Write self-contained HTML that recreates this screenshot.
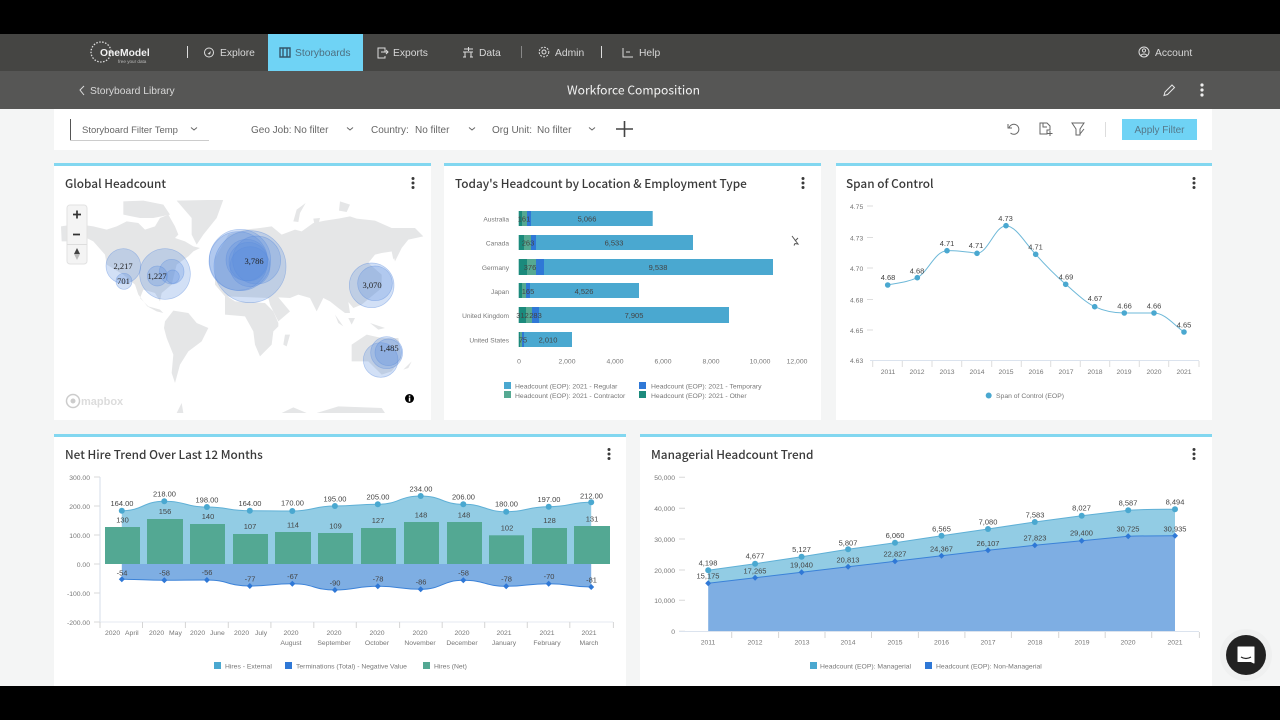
<!DOCTYPE html>
<html lang="en"><head><meta charset="utf-8"><title>Workforce Composition</title>
<style>
html,body{margin:0;padding:0;background:#000;width:1280px;height:720px;overflow:hidden}
svg{display:block;filter:blur(.35px)}
text{font-family:"Liberation Sans","Noto Sans CJK JP",sans-serif}
.n{font-size:10.3px;fill:#d8d8d8}
.t{font-family:"Noto Sans CJK JP","Liberation Sans",sans-serif;font-size:11.8px;fill:#3a3a3a;font-weight:500}
.f{font-size:10px;fill:#666}
.d{font-size:7.5px;fill:#444;text-anchor:middle}
.c{font-size:6.8px;fill:#777;text-anchor:middle}
.g{font-size:6.8px;fill:#777}
.ic{fill:none;stroke:#ddd;stroke-width:1}
.ig{fill:none;stroke:#666;stroke-width:1}
</style></head><body>
<svg width="1280" height="720" viewBox="0 0 1280 720" xmlns="http://www.w3.org/2000/svg">
<defs>
<path id="dm" d="M0-3 3 0 0 3-3 0Z" fill="#2f78d6"/>
<g id="keb" fill="#3a3a3a"><circle cx="0" cy="-4.5" r="1.5"/><circle cx="0" cy="0" r="1.5"/><circle cx="0" cy="4.5" r="1.5"/></g>
<clipPath id="mc"><rect x="54" y="200" width="377" height="213"/></clipPath>
</defs>
<rect width="1280" height="720" fill="#000"/>
<rect y="34" width="1280" height="652" fill="#f4f5f5"/>
<rect y="34" width="1280" height="37" fill="#454543"/>
<rect y="71" width="1280" height="38" fill="#565655"/>
<rect x="268" y="34" width="95" height="37" fill="#6fd3f5"/>

<!-- nav -->
<circle cx="101" cy="52" r="10" fill="none" stroke="#ddd" stroke-width="1.3" stroke-dasharray="1.5 1.5"/>
<text x="100" y="56" font-size="10.3" font-weight="bold" fill="#f0f0f0">OneModel</text>
<text x="118" y="63" font-size="4.6" fill="#bbb">free your data</text>
<rect x="187" y="46" width="1" height="12" fill="#ddd"/>
<circle cx="209" cy="52.5" r="4.5" class="ic"/><path d="M207.5 54 211 51 210 54.5Z" fill="#ddd"/>
<text x="220" y="56" class="n">Explore</text>
<path d="M280 48h10v9h-10zM283 48v9M287 48v9" fill="none" stroke="#34566a" stroke-width="1.4"/>
<text x="295" y="56" style="fill:#4d6f80;font-size:10.3px">Storyboards</text>
<path d="M385 52V48h-7v10h7v-2M381 52h7m-2-2 2 2-2 2" class="ic"/>
<text x="393" y="56" class="n">Exports</text>
<path d="M464 49h9M468.500 47v4M463 52h10M465 52v5M471 52v5M463 57h3M470 57h3" class="ic"/>
<text x="479" y="56" class="n">Data</text>
<rect x="521" y="46" width="1" height="12" fill="#888"/>
<circle cx="544" cy="52" r="2" class="ic"/><circle cx="544" cy="52" r="4.800" fill="none" stroke="#ddd" stroke-dasharray="2 1.200"/>
<text x="555" y="56" class="n">Admin</text>
<rect x="601" y="46" width="1" height="12" fill="#ddd"/>
<path d="M623 48v9h10M626 52h4" class="ic"/>
<text x="639" y="56" class="n">Help</text>
<circle cx="1144" cy="52" r="5" class="ic"/><circle cx="1144" cy="50.500" r="1.600" class="ic"/><path d="M1141 55.500c1-2 5-2 6 0" class="ic"/>
<text x="1155" y="56" class="n">Account</text>

<!-- subheader -->
<path d="M84 86 80 90 84 95" fill="none" stroke="#ddd"/>
<text x="90" y="94" class="n">Storyboard Library</text>
<text x="633.500" y="94.500" text-anchor="middle" font-size="12.100" fill="#f2f2f2" style="font-family:'Noto Sans CJK JP',sans-serif">Workforce Composition</text>
<path d="M1164 95.500l1-3.500 7-7 2.500 2.500-7 7z" fill="none" stroke="#e6e6e6"/>
<g transform="translate(1202 90)"><circle cy="-5" r="1.600" fill="#eee"/><circle r="1.600" fill="#eee"/><circle cy="5" r="1.600" fill="#eee"/></g>

<!-- filter bar -->
<rect x="54" y="109" width="1158" height="41" fill="#fff"/>
<rect x="70" y="119" width="1" height="21" fill="#555"/>
<rect x="70" y="140" width="139" height="1" fill="#ccc"/>
<text x="82" y="133" style="font-size:9.5px;fill:#666">Storyboard Filter Temp</text>
<path d="M191 127.500l3 2.500 3-2.500M347 127.500l3 2.500 3-2.500M469 127.500l3 2.500 3-2.500M589 127.500l3 2.500 3-2.500" class="ig"/>
<text x="251" y="133" class="f">Geo Job:</text><text x="294" y="133" class="f">No filter</text>
<text x="371" y="133" class="f">Country:</text><text x="415" y="133" class="f">No filter</text>
<text x="492" y="133" class="f">Org Unit:</text><text x="537" y="133" class="f">No filter</text>
<path d="M616 129h17M624.500 121v16" stroke="#444" stroke-width="1.600" fill="none"/>
<path d="M1009 128a5 5 0 1 1 1.500 5M1008 124v4h4" class="ig"/>
<path d="M1040 123h7l3 3v4h-3v4h-7zM1043 123v4h4M1050 131v5M1047.500 133.500h5" class="ig"/>
<path d="M1072 123h12l-4 6v6h-4v-6zM1080 134l4-5" class="ig"/>
<rect x="1105" y="122" width="1" height="15" fill="#ddd"/>
<rect x="1122" y="119" width="75" height="21" fill="#6fd3f5"/>
<text x="1159.500" y="133" text-anchor="middle" font-size="10" fill="#55788a">Apply Filter</text>

<!-- cards -->
<g fill="#fff">
<rect x="54" y="163" width="377" height="257"/><rect x="444" y="163" width="377" height="257"/><rect x="836" y="163" width="376" height="257"/>
<rect x="54" y="434" width="572" height="252"/><rect x="640" y="434" width="572" height="252"/>
</g>
<g fill="#82d7f0">
<rect x="54" y="163" width="377" height="3"/><rect x="444" y="163" width="377" height="3"/><rect x="836" y="163" width="376" height="3"/>
<rect x="54" y="434" width="572" height="3"/><rect x="640" y="434" width="572" height="3"/>
</g>
<text x="65" y="188" class="t">Global Headcount</text>
<text x="455" y="188" class="t">Today's Headcount by Location &amp; Employment Type</text>
<text x="846" y="188" class="t">Span of Control</text>
<text x="65" y="459" class="t">Net Hire Trend Over Last 12 Months</text>
<text x="651" y="459" class="t">Managerial Headcount Trend</text>
<use href="#keb" x="413" y="183"/><use href="#keb" x="803" y="183"/><use href="#keb" x="1194" y="183"/><use href="#keb" x="609" y="454"/><use href="#keb" x="1194" y="454"/>

<!-- map -->
<g clip-path="url(#mc)">
<g transform="translate(60 198) scale(.33333)" fill="#e5e6e7">
<path d="M3 85 50 78 100 85 140 95 170 85 200 70 235 75 255 95 285 85 300 60 325 50 345 85 355 110 345 120 375 130 400 145 420 150 400 160 385 175 350 200 335 260 305 285 300 310 285 285 250 275 240 300 265 325 300 335 310 345 290 340 262 325 235 290 225 260 190 230 140 200 135 170 100 130 60 110 20 130 5 130Z"/>
<path d="M190 10 250 8 310 20 330 50 280 60 240 60 190 50Z"/>
<path d="M350 8 490 5 470 60 430 110 410 140 395 110 395 60Z"/>
<path d="M315 370 340 338 385 345 410 375 445 390 425 430 385 460 360 500 345 555 335 525 340 470 320 420 312 390Z"/>
<path d="M350 645 365 615 370 645Z"/>
</g>
<g transform="translate(235 198) scale(.33333)" fill="#e5e6e7">
<path d="M-60 180-20 110 30 95 75 90 110 85 140 110 180 95 200 100 235 75 270 68 310 62 345 55 365 62 420 68 470 90 540 90 565 115 520 125 500 150 480 190 472 160 440 165 420 170 400 195 440 230 440 270 380 320 355 330 340 312 345 345 330 345 310 330 285 310 265 300 245 340 225 300 190 290 165 300 130 298 165 340 130 370 105 320 100 300-30 295-60 260Z"/>
<path d="M-30 290 0 310 90 315 115 340 130 375 130 385 115 400 110 440 75 475 60 440 55 400 30 355-30 350Z"/>
<path d="M150 410 165 410 155 445 145 440Z"/>
<path d="M350 440 395 410 440 420 490 420 500 480 470 520 440 530 400 490 350 490Z"/>
<path d="M300 350 325 385 310 375ZM340 360 360 360 350 380ZM405 375 450 390 430 395ZM505 515 530 490 520 510ZM470 160 495 140 475 185ZM175 70 185 35 212 15 195 45 190 72ZM235 62 255 60 250 80 238 78ZM315 10 345 20 335 42 312 38Z"/>
<path d="M140 645 175 628 215 645ZM245 645 310 625 440 630 450 645Z"/>
</g>
</g>
<g transform="translate(50 160) scale(.33333)">
<g fill="rgba(90,140,222,.27)" stroke="rgba(90,140,222,.45)" stroke-width="2">
<circle cx="220" cy="318" r="52"/><circle cx="222" cy="364" r="24"/><circle cx="345" cy="342" r="76"/><circle cx="365" cy="335" r="37"/><circle cx="322" cy="348" r="30"/><circle cx="368" cy="350" r="20"/>
<circle cx="565" cy="303" r="88"/><circle cx="600" cy="320" r="108"/><circle cx="570" cy="300" r="92"/><circle cx="590" cy="300" r="62"/><circle cx="595" cy="305" r="58"/><circle cx="600" cy="320" r="60"/><circle cx="620" cy="300" r="72"/>
<circle cx="965" cy="376" r="67"/><circle cx="975" cy="370" r="52"/>
<circle cx="992" cy="600" r="52"/><circle cx="1010" cy="578" r="48"/><circle cx="1015" cy="577" r="40"/>
</g>
</g>
<g>
<text x="123" y="269" text-anchor="middle" font-size="8.5" fill="#222" style="font-family:'Liberation Serif',serif">2,217</text><text x="123.500" y="284" text-anchor="middle" font-size="8.5" fill="#222" style="font-family:'Liberation Serif',serif">701</text><text x="157" y="279" text-anchor="middle" font-size="8.5" fill="#222" style="font-family:'Liberation Serif',serif">1,227</text><text x="254" y="264" text-anchor="middle" font-size="8.5" fill="#222" style="font-family:'Liberation Serif',serif">3,786</text><text x="372" y="288" text-anchor="middle" font-size="8.5" fill="#222" style="font-family:'Liberation Serif',serif">3,070</text><text x="389" y="351" text-anchor="middle" font-size="8.5" fill="#222" style="font-family:'Liberation Serif',serif">1,485</text>
</g>
<rect x="67" y="205" width="20" height="59" rx="3" fill="#f4f4f4" stroke="#e2e2e2"/>
<path d="M73 214.500h8M77 210.500v8M73 234.500h7" stroke="#333" stroke-width="1.700" fill="none"/>
<rect x="67" y="244" width="20" height="1" fill="#ddd"/>
<path d="M77 248l3 6h-6z" fill="#444"/><path d="M77 260l3-6h-6z" fill="#bbb"/>
<circle cx="73" cy="401" r="6.500" fill="none" stroke="#ccc" stroke-width="1.500"/><circle cx="73" cy="401" r="2.500" fill="#ccc"/>
<text x="81" y="405" font-size="11" font-weight="bold" fill="#dcdcdc">mapbox</text>
<circle cx="409.500" cy="398.500" r="4.500" fill="#000"/><rect x="408.800" y="397.500" width="1.500" height="4" fill="#fff"/><rect x="408.800" y="395.500" width="1.500" height="1.300" fill="#fff"/>

<!-- bar chart -->
<g fill="#1b8a7c"><rect x="518.700" y="211" width="3.300" height="15"/><rect x="518.700" y="235" width="5.300" height="15"/><rect x="518.700" y="259" width="8.300" height="16"/><rect x="518.700" y="283" width="3.300" height="15"/><rect x="518.700" y="307" width="7.300" height="16"/><rect x="518.700" y="332" width="1.300" height="15"/></g>
<g fill="#55a992"><rect x="522" y="211" width="5" height="15"/><rect x="524" y="235" width="7" height="15"/><rect x="527" y="259" width="9" height="16"/><rect x="522" y="283" width="4" height="15"/><rect x="526" y="307" width="6" height="16"/><rect x="520" y="332" width="2" height="15"/></g>
<g fill="#2f78d6"><rect x="527" y="211" width="4" height="15"/><rect x="531" y="235" width="5" height="15"/><rect x="536" y="259" width="8" height="16"/><rect x="526" y="283" width="4" height="15"/><rect x="532" y="307" width="7" height="16"/><rect x="522" y="332" width="2" height="15"/></g>
<g fill="#4aa8d0"><rect x="531" y="211" width="121.700" height="15"/><rect x="536" y="235" width="157" height="15"/><rect x="544" y="259" width="229" height="16"/><rect x="530" y="283" width="109" height="15"/><rect x="539" y="307" width="190" height="16"/><rect x="524" y="332" width="48" height="15"/></g>
<g>
<text x="509" y="221.500" text-anchor="end" style="font-size:6.600px;fill:#777">Australia</text><text x="509" y="245.500" text-anchor="end" style="font-size:6.600px;fill:#777">Canada</text><text x="509" y="270" text-anchor="end" style="font-size:6.600px;fill:#777">Germany</text><text x="509" y="294" text-anchor="end" style="font-size:6.600px;fill:#777">Japan</text><text x="509" y="318" text-anchor="end" style="font-size:6.600px;fill:#777">United Kingdom</text><text x="509" y="342.500" text-anchor="end" style="font-size:6.600px;fill:#777">United States</text>
</g>
<g class="d">
<text x="524" y="221.500">161</text><text x="528" y="245.500">263</text><text x="530" y="270">376</text><text x="528" y="294">165</text><text x="522.500" y="318">312</text><text x="535.500" y="318">283</text><text x="523" y="342.500">75</text>
<text x="587" y="221.500">5,066</text><text x="614" y="245.500">6,533</text><text x="658" y="270">9,538</text><text x="584" y="294">4,526</text><text x="634" y="318">7,905</text><text x="548" y="342.500">2,010</text>
</g>
<g class="c"><text x="519" y="363.500">0</text><text x="567" y="363.500">2,000</text><text x="615" y="363.500">4,000</text><text x="663" y="363.500">6,000</text><text x="711" y="363.500">8,000</text><text x="760" y="363.500">10,000</text><text x="797" y="363.500">12,000</text></g>
<rect x="504" y="382" width="7" height="7" fill="#4aa8d0"/><rect x="639" y="382" width="7" height="7" fill="#2f78d6"/><rect x="504" y="391" width="7" height="7" fill="#55a992"/><rect x="639" y="391" width="7" height="7" fill="#1b8a7c"/>
<g class="g"><text x="515" y="388.500">Headcount (EOP): 2021 - Regular</text><text x="651" y="388.500">Headcount (EOP): 2021 - Temporary</text><text x="515" y="398">Headcount (EOP): 2021 - Contractor</text><text x="651" y="398">Headcount (EOP): 2021 - Other</text></g>
<path d="M792 236l6 8-3-.5-1 2M798 238l-3 3" fill="none" stroke="#555"/>

<!-- span of control -->
<g class="g"><text x="850" y="209">4.75</text><text x="850" y="240.500">4.73</text><text x="850" y="271">4.70</text><text x="850" y="302.500">4.68</text><text x="850" y="333">4.65</text><text x="850" y="363">4.63</text></g>
<path d="M867 206h6M867 237.500h6M867 268h6M867 299.500h6M867 330h6" stroke="#ddd"/>
<path d="M870 360.500H1199" stroke="#dbe3ee"/>
<path d="M872.700 361v6M902.300 361v6M932 361v6M961.700 361v6M991.700 361v6M1021.300 361v6M1050.700 361v6M1080.300 361v6M1109.700 361v6M1139.300 361v6M1168.700 361v6M1199 361v6" stroke="#ddd"/>
<path d="M887.700 285C898 283 908 282 917.300 277.700C928 272 935 251 947 250.700C957 250.500 967 252 977 253.300C988 253 995 226 1006 225.700C1016 226 1025 243 1035.700 254.300C1046 266 1055 275 1065.700 284.300C1076 293 1085 302 1094.700 306.700C1104 311 1114 313 1124.300 313C1134 313 1144 313 1154 313C1165 313 1174 325 1184 332" fill="none" stroke="#6db8d8"/>
<g fill="#4aa8d0"><circle cx="887.700" cy="285" r="2.800"/><circle cx="917.300" cy="277.700" r="2.800"/><circle cx="947" cy="250.700" r="2.800"/><circle cx="977" cy="253.300" r="2.800"/><circle cx="1006" cy="225.700" r="2.800"/><circle cx="1035.700" cy="254.300" r="2.800"/><circle cx="1065.700" cy="284.300" r="2.800"/><circle cx="1094.700" cy="306.700" r="2.800"/><circle cx="1124.300" cy="313" r="2.800"/><circle cx="1154" cy="313" r="2.800"/><circle cx="1184" cy="332" r="2.800"/><circle cx="988.700" cy="395.500" r="3"/></g>
<g class="d"><text x="888" y="280">4.68</text><text x="917" y="273.500">4.68</text><text x="947" y="246">4.71</text><text x="976" y="248">4.71</text><text x="1005.500" y="221">4.73</text><text x="1035.500" y="249.500">4.71</text><text x="1066" y="279.500">4.69</text><text x="1095" y="301">4.67</text><text x="1124.500" y="308.500">4.66</text><text x="1154" y="308.500">4.66</text><text x="1184" y="327.500">4.65</text></g>
<g class="c"><text x="888" y="374">2011</text><text x="917" y="374">2012</text><text x="947" y="374">2013</text><text x="977" y="374">2014</text><text x="1006" y="374">2015</text><text x="1036" y="374">2016</text><text x="1066" y="374">2017</text><text x="1095" y="374">2018</text><text x="1124" y="374">2019</text><text x="1154" y="374">2020</text><text x="1184" y="374">2021</text></g>
<text x="996" y="398" class="g">Span of Control (EOP)</text>

<!-- net hire -->
<g class="g"><text x="90" y="480" text-anchor="end">300.00</text><text x="90" y="509" text-anchor="end">200.00</text><text x="90" y="538" text-anchor="end">100.00</text><text x="90" y="567" text-anchor="end">0.00</text><text x="90" y="596" text-anchor="end">-100.00</text><text x="90" y="625" text-anchor="end">-200.00</text></g>
<path d="M94 477h6M94 506h6M94 535h6M94 564h6M94 593h6M94 622h6" stroke="#d8d8d8"/>
<path d="M100 477V622" stroke="#d5dde8"/>
<path d="M100 622H613" stroke="#e4e9f0"/>
<path d="M100 622v6M142.500 622v6M185.400 622v6M228.300 622v6M270.900 622v6M313.800 622v6M356.300 622v6M399.600 622v6M442.200 622v6M484.700 622v6M527.300 622v6M569.800 622v6M613.400 622v6" stroke="#d5d5d5"/>
<path d="M121.800 510.700C143 510.700 143 501.300 164.300 501.300C185.600 501.300 185.600 507 206.900 507C228 507 228 510.700 249.800 510.700C271 510.700 271 511 292.300 511C313.600 511 313.600 506 334.900 506C356 506 356 504.300 377.800 504.300C399 504.300 399 496 420.700 496C442 496 442 504.300 463.300 504.300C485 504.300 485 511.700 506.200 511.700C527 511.700 527 506.700 548.700 506.700C570 506.700 570 502.300 591.200 502.300V564H121.800Z" fill="#92cce4" stroke="none"/>
<path d="M121.800 510.700C143 510.700 143 501.300 164.300 501.300C185.600 501.300 185.600 507 206.900 507C228 507 228 510.700 249.800 510.700C271 510.700 271 511 292.300 511C313.600 511 313.600 506 334.900 506C356 506 356 504.300 377.800 504.300C399 504.300 399 496 420.700 496C442 496 442 504.300 463.300 504.300C485 504.300 485 511.700 506.200 511.700C527 511.700 527 506.700 548.700 506.700C570 506.700 570 502.300 591.200 502.300" fill="none" stroke="#5fb0d6"/>
<path d="M121.800 579.300C143 579.300 143 580.300 164.300 580.300C185.600 580.300 185.600 580 206.900 580C228 580 228 586 249.800 586C271 586 271 583.700 292.300 583.700C313.600 583.700 313.600 590 334.900 590C356 590 356 586.300 377.800 586.300C399 586.300 399 589.300 420.700 589.300C442 589.300 442 580.300 463.300 580.300C485 580.300 485 586.300 506.200 586.300C527 586.300 527 583.700 548.700 583.700C570 583.700 570 587 591.200 587V564H121.800Z" fill="#7eaee3"/>
<path d="M121.800 579.300C143 579.300 143 580.300 164.300 580.300C185.600 580.300 185.600 580 206.900 580C228 580 228 586 249.800 586C271 586 271 583.700 292.300 583.700C313.600 583.700 313.600 590 334.900 590C356 590 356 586.300 377.800 586.300C399 586.300 399 589.300 420.700 589.300C442 589.300 442 580.300 463.300 580.300C485 580.300 485 586.300 506.200 586.300C527 586.300 527 583.700 548.700 583.700C570 583.700 570 587 591.200 587" fill="none" stroke="#3b82d8"/>
<g fill="#53a893"><rect x="105" y="527" width="35" height="37"/><rect x="147" y="519" width="36" height="45"/><rect x="190" y="524" width="35" height="40"/><rect x="233" y="534" width="35" height="30"/><rect x="275" y="532" width="36" height="32"/><rect x="318" y="533" width="35" height="31"/><rect x="361" y="528" width="35" height="36"/><rect x="404" y="522" width="35" height="42"/><rect x="447" y="522" width="35" height="42"/><rect x="489" y="535.300" width="35" height="28.700"/><rect x="532" y="528" width="35" height="36"/><rect x="574" y="526" width="36" height="38"/></g>
<g fill="#4aa8d0"><circle cx="121.800" cy="510.700" r="3"/><circle cx="164.300" cy="501.300" r="3"/><circle cx="206.900" cy="507" r="3"/><circle cx="249.800" cy="510.700" r="3"/><circle cx="292.300" cy="511" r="3"/><circle cx="334.900" cy="506" r="3"/><circle cx="377.800" cy="504.300" r="3"/><circle cx="420.700" cy="496" r="3"/><circle cx="463.300" cy="504.300" r="3"/><circle cx="506.200" cy="511.700" r="3"/><circle cx="548.700" cy="506.700" r="3"/><circle cx="591.200" cy="502.300" r="3"/></g>
<use href="#dm" x="121.800" y="579.300"/><use href="#dm" x="164.300" y="580.300"/><use href="#dm" x="206.900" y="580"/><use href="#dm" x="249.800" y="586"/><use href="#dm" x="292.300" y="583.700"/><use href="#dm" x="334.900" y="590"/><use href="#dm" x="377.800" y="586.300"/><use href="#dm" x="420.700" y="589.300"/><use href="#dm" x="463.300" y="580.300"/><use href="#dm" x="506.200" y="586.300"/><use href="#dm" x="548.700" y="583.700"/><use href="#dm" x="591.200" y="587"/>
<g class="d">
<text x="122" y="506">164.00</text><text x="164.500" y="496.300">218.00</text><text x="207" y="502.300">198.00</text><text x="250" y="506">164.00</text><text x="292.500" y="505.700">170.00</text><text x="335" y="501.300">195.00</text><text x="378" y="499.300">205.00</text><text x="421" y="491.300">234.00</text><text x="463.500" y="499.300">206.00</text><text x="506.500" y="506.300">180.00</text><text x="549" y="502">197.00</text><text x="591.500" y="498.300">212.00</text>
<text x="122.500" y="522.300">130</text><text x="165" y="514">156</text><text x="208" y="519">140</text><text x="250" y="529">107</text><text x="293" y="527.300">114</text><text x="335.500" y="528.300">109</text><text x="378" y="523">127</text><text x="421" y="517.300">148</text><text x="464" y="517.300">148</text><text x="507" y="530.300">102</text><text x="549.500" y="523">128</text><text x="592" y="521.300">131</text>
<text x="122" y="575.300">-54</text><text x="164.500" y="575.700">-58</text><text x="207" y="575">-56</text><text x="250" y="581.300">-77</text><text x="292.500" y="579">-67</text><text x="335" y="585.700">-90</text><text x="378" y="581.700">-78</text><text x="421" y="584.700">-86</text><text x="463.500" y="575.700">-58</text><text x="506.500" y="581.700">-78</text><text x="549" y="579">-70</text><text x="591.500" y="582.700">-81</text>
</g>
<g class="g">
<text x="105" y="635">2020</text><text x="125" y="635">April</text><text x="149" y="635">2020</text><text x="169" y="635">May</text><text x="190" y="635">2020</text><text x="210" y="635">June</text><text x="234" y="635">2020</text><text x="255" y="635">July</text>
</g>
<g class="c">
<text x="291" y="635">2020</text><text x="291" y="645">August</text><text x="334" y="635">2020</text><text x="334" y="645">September</text><text x="377" y="635">2020</text><text x="377" y="645">October</text><text x="420" y="635">2020</text><text x="420" y="645">November</text><text x="462" y="635">2020</text><text x="462" y="645">December</text><text x="504" y="635">2021</text><text x="504" y="645">January</text><text x="547" y="635">2021</text><text x="547" y="645">February</text><text x="589" y="635">2021</text><text x="589" y="645">March</text>
</g>
<rect x="214" y="662" width="7" height="7" fill="#4aa8d0"/><rect x="285" y="662" width="7" height="7" fill="#2f78d6"/><rect x="423" y="662" width="7" height="7" fill="#53a893"/>
<g class="g"><text x="225" y="668.500">Hires - External</text><text x="296" y="668.500">Terminations (Total) - Negative Value</text><text x="434" y="668.500">Hires (Net)</text></g>

<!-- managerial -->
<g class="g"><text x="675" y="480" text-anchor="end">50,000</text><text x="675" y="511" text-anchor="end">40,000</text><text x="675" y="542" text-anchor="end">30,000</text><text x="675" y="573" text-anchor="end">20,000</text><text x="675" y="603" text-anchor="end">10,000</text><text x="675" y="634" text-anchor="end">0</text></g>
<path d="M679 477.300h6M679 508.300h6M679 539h6M679 570h6M679 600.300h6M679 631.300h6" stroke="#d8d8d8"/>
<path d="M708.200 570.300L755.100 563.700 801.600 556.700 848.100 549.300 895 542.700 941.500 535.700 988 529 1034.800 522 1081.700 515.700 1128.200 510.300Q1150 509 1175 509.300V535.700L1128.200 536.300 1081.700 540.700 1034.800 545.300 988 550.300 941.500 555.700 895 561.300 848.100 566.700 801.600 572.300 755.100 577.700 708.200 583.300Z" fill="#92cce4"/>
<path d="M708.200 583.300L755.100 577.700 801.600 572.300 848.100 566.700 895 561.300 941.500 555.700 988 550.300 1034.800 545.300 1081.700 540.700 1128.200 536.300Q1150 535.700 1175 535.700V631.300H708.200Z" fill="#7eaee3"/>
<path d="M708.200 570.300L755.100 563.700 801.600 556.700 848.100 549.300 895 542.700 941.500 535.700 988 529 1034.800 522 1081.700 515.700 1128.200 510.300Q1150 509 1175 509.300" fill="none" stroke="#5fb0d6"/>
<path d="M708.200 583.300L755.100 577.700 801.600 572.300 848.100 566.700 895 561.300 941.500 555.700 988 550.300 1034.800 545.300 1081.700 540.700 1128.200 536.300Q1150 535.700 1175 535.700" fill="none" stroke="#3b82d8"/>
<path d="M679 631.500H1199" stroke="#dbe3ee"/>
<path d="M731.700 632v6M778.600 632v6M825 632v6M871.500 632v6M918.400 632v6M964.900 632v6M1011.400 632v6M1058.700 632v6M1105.200 632v6M1151.700 632v6M1199.400 632v6" stroke="#d5d5d5"/>
<g fill="#4aa8d0"><circle cx="708.200" cy="570.300" r="3"/><circle cx="755.100" cy="563.700" r="3"/><circle cx="801.600" cy="556.700" r="3"/><circle cx="848.100" cy="549.300" r="3"/><circle cx="895" cy="542.700" r="3"/><circle cx="941.500" cy="535.700" r="3"/><circle cx="988" cy="529" r="3"/><circle cx="1034.800" cy="522" r="3"/><circle cx="1081.700" cy="515.700" r="3"/><circle cx="1128.200" cy="510.300" r="3"/><circle cx="1175" cy="509.300" r="3"/></g>
<use href="#dm" x="708.200" y="583.300"/><use href="#dm" x="755.100" y="577.700"/><use href="#dm" x="801.600" y="572.300"/><use href="#dm" x="848.100" y="566.700"/><use href="#dm" x="895" y="561.300"/><use href="#dm" x="941.500" y="555.700"/><use href="#dm" x="988" y="550.300"/><use href="#dm" x="1034.800" y="545.300"/><use href="#dm" x="1081.700" y="540.700"/><use href="#dm" x="1128.200" y="536.300"/><use href="#dm" x="1175" y="535.700"/>
<g class="d">
<text x="708" y="565.300">4,198</text><text x="755" y="558.700">4,677</text><text x="801.500" y="552">5,127</text><text x="848" y="545.700">5,807</text><text x="895" y="538">6,060</text><text x="941.500" y="531.300">6,565</text><text x="988" y="524.300">7,080</text><text x="1035" y="517.700">7,583</text><text x="1081.500" y="510.300">8,027</text><text x="1128" y="505.700">8,587</text><text x="1175" y="504.300">8,494</text>
<text x="708" y="578.700">15,175</text><text x="755" y="573.300">17,265</text><text x="801.500" y="567.300">19,040</text><text x="848" y="562.300">20,813</text><text x="895" y="556.700">22,827</text><text x="941.500" y="551.700">24,367</text><text x="988" y="546">26,107</text><text x="1035" y="540.300">27,823</text><text x="1081.500" y="535.700">29,400</text><text x="1128" y="531.700">30,725</text><text x="1175" y="531.300">30,935</text>
</g>
<g class="c"><text x="708" y="644.500">2011</text><text x="755" y="644.500">2012</text><text x="802" y="644.500">2013</text><text x="848" y="644.500">2014</text><text x="895" y="644.500">2015</text><text x="941.500" y="644.500">2016</text><text x="988" y="644.500">2017</text><text x="1035" y="644.500">2018</text><text x="1082" y="644.500">2019</text><text x="1128" y="644.500">2020</text><text x="1175" y="644.500">2021</text></g>
<rect x="810" y="662" width="7" height="7" fill="#4aa8d0"/><rect x="925" y="662" width="7" height="7" fill="#2f78d6"/>
<g class="g"><text x="820" y="668.500">Headcount (EOP): Managerial</text><text x="936" y="668.500">Headcount (EOP): Non-Managerial</text></g>

<!-- chat -->
<circle cx="1246" cy="655" r="26" fill="#eceeee" opacity=".7"/>
<circle cx="1246" cy="655" r="20" fill="#222"/>
<path d="M1238 647h16v16l-3-1.500h-13z" fill="#fff" stroke="#fff" stroke-linejoin="round"/>
<path d="M1241 657q5 3 10 0" fill="none" stroke="#222" stroke-width="1.200"/>
<rect y="686" width="1280" height="34" fill="#000"/>
</svg>
</body></html>
